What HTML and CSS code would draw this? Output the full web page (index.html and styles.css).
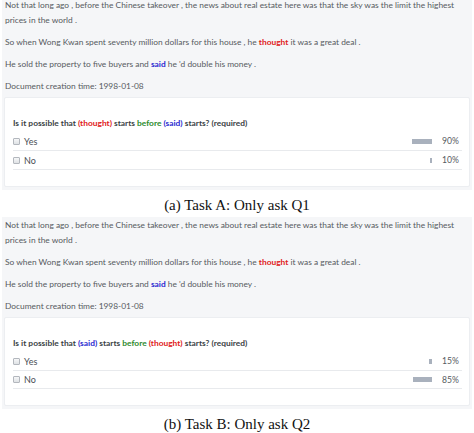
FILE: index.html
```html
<!DOCTYPE html>
<html>
<head>
<meta charset="utf-8">
<link rel="stylesheet" href="styles.css">
</head>
<body>
<div class="figure">
  <div class="panel panel-a">
    <p>Not that long ago , before the Chinese takeover , the news about real estate here was that the sky was the limit the highest prices in the world .</p>
    <p>So when Wong Kwan spent seventy million dollars for this house , he <b class="red">thought</b> it was a great deal .</p>
    <p>He sold the property to five buyers and <b class="blue">said</b> he 'd double his money .</p>
    <p>Document creation time: 1998-01-08</p>
    <div class="card">
      <div class="question">Is it possible that <span class="red">(thought)</span> starts <span class="green">before</span> <span class="blue">(said)</span> starts? (required)</div>
      <div class="option">
        <span class="box"></span><span class="label">Yes</span>
        <span class="track"><span class="bar" style="width:90%"></span></span><span class="pct">90%</span>
      </div>
      <div class="option">
        <span class="box"></span><span class="label">No</span>
        <span class="track"><span class="bar" style="width:10%"></span></span><span class="pct">10%</span>
      </div>
    </div>
  </div>
  <div class="caption">(a) Task A: Only ask Q1</div>

  <div class="panel panel-b">
    <p>Not that long ago , before the Chinese takeover , the news about real estate here was that the sky was the limit the highest prices in the world .</p>
    <p>So when Wong Kwan spent seventy million dollars for this house , he <b class="red">thought</b> it was a great deal .</p>
    <p>He sold the property to five buyers and <b class="blue">said</b> he 'd double his money .</p>
    <p>Document creation time: 1998-01-08</p>
    <div class="card">
      <div class="question">Is it possible that <span class="blue">(said)</span> starts <span class="green">before</span> <span class="red">(thought)</span> starts? (required)</div>
      <div class="option">
        <span class="box"></span><span class="label">Yes</span>
        <span class="track"><span class="bar" style="width:15%"></span></span><span class="pct">15%</span>
      </div>
      <div class="option">
        <span class="box"></span><span class="label">No</span>
        <span class="track"><span class="bar" style="width:85%"></span></span><span class="pct">85%</span>
      </div>
    </div>
  </div>
  <div class="caption">(b) Task B: Only ask Q2</div>
</div>
</body>
</html>
```

FILE: styles.css
```css
html, body {
  margin: 0;
  padding: 0;
  background: #ffffff;
}

.figure {
  width: 474px;
  display: flex;
  flex-direction: column;
  font-family: Lato, "Liberation Sans", sans-serif;
}

.panel {
  margin: 0 2px;
  background: #f5f6f8;
  padding: 0 2px 3px 2px;
  color: #555a60;
  font-size: 8.4px;
}

.panel-a p:first-child {
  margin-top: -2px;
}

.panel-b {
  padding-top: 1px;
}

.panel p {
  margin: 0 0 7px 0;
  line-height: 15px;
  padding-left: 1px;
}

.panel p:nth-of-type(4) {
  margin-bottom: 3px;
}

.red { color: #e02020; font-weight: 700; }
.blue { color: #2a2ad0; font-weight: 700; }
.green { color: #2c8a2c; font-weight: 700; }

.card {
  background: #ffffff;
  border: 1px solid #eceef1;
  border-radius: 2px;
  padding: 19px 7px 16px 8px;
}

.question {
  font-weight: 700;
  color: #3a3f45;
  line-height: 12px;
  margin-bottom: 3px;
}

.panel-b .option:last-child {
  height: 17px;
}

.option {
  display: flex;
  align-items: center;
  height: 18px;
  border-bottom: 1px solid #e8eaed;
}

.box {
  width: 5px;
  height: 5px;
  border: 1px solid #b3b7bd;
  background: linear-gradient(#f6f7f8, #dfe2e5);
  border-radius: 1px;
  margin-right: 4px;
  flex: none;
}

.label {
  flex: 1;
  color: #4a4f55;
  font-size: 9px;
}

.track {
  width: 22px;
  height: 5px;
  display: flex;
  justify-content: flex-end;
  margin-right: 10px;
}

.bar {
  background: #a9b1bd;
  height: 5px;
}

.pct {
  width: 20px;
  color: #555a60;
  font-size: 8.6px;
}

.caption {
  font-family: "Liberation Serif", serif;
  font-size: 15px;
  color: #111;
  text-align: center;
  height: 27px;
  line-height: 30px;
}
```
